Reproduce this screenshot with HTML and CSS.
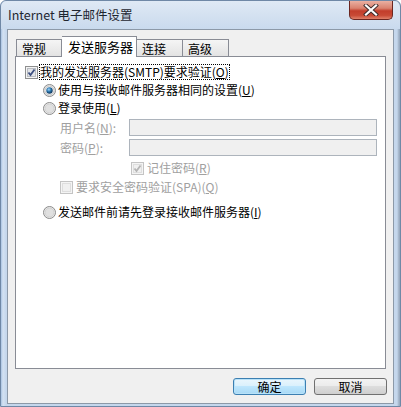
FILE: index.html
```html
<!DOCTYPE html>
<html>
<head>
<meta charset="utf-8">
<link rel="stylesheet" href="styles.css">
</head>
<body>
<div class="window">
  <div class="titlebar">
    <span class="title">Internet 电子邮件设置</span>
    <div class="close">
      <svg width="16" height="12" viewBox="0 0 16 12"><path d="M3 1.5 L13 10.5 M13 1.5 L3 10.5" stroke="#3b2a2a" stroke-width="4" stroke-linecap="square"/><path d="M3 1.5 L13 10.5 M13 1.5 L3 10.5" stroke="#ffffff" stroke-width="2.2" stroke-linecap="square"/></svg>
    </div>
  </div>
  <div class="client">
    <div class="tabs">
      <div class="tab">常规</div>
      <div class="tab active">发送服务器</div>
      <div class="tab">连接</div>
      <div class="tab">高级</div>
    </div>
    <div class="panel">
      <div class="row r1">
        <svg class="cb" width="13" height="13" viewBox="0 0 13 13"><rect x="0.5" y="0.5" width="12" height="12" fill="#f4f4f4" stroke="#8e8f8f"/><rect x="2.5" y="2.5" width="8" height="8" fill="#e2e4e8" stroke="#b9bcc1"/><path d="M3.5 6.5 L5.5 9 L9.5 3.5" fill="none" stroke="#3d4f80" stroke-width="1.8"/></svg>
        <span class="lbl focus">我的发送服务器(SMTP)要求验证(<u>O</u>)</span>
      </div>
      <div class="row r2">
        <svg class="rb" width="13" height="13" viewBox="0 0 13 13"><defs><radialGradient id="g1" cx="0.4" cy="0.35" r="0.6"><stop offset="0" stop-color="#9fd6ff"/><stop offset="0.6" stop-color="#236ea4"/><stop offset="1" stop-color="#133c63"/></radialGradient></defs><circle cx="6.5" cy="6.5" r="6" fill="#e9e9e9" stroke="#8b8b8b"/><circle cx="6.5" cy="6.5" r="4.5" fill="#f6f6f6" stroke="#c5c5c5"/><circle cx="6.5" cy="6.5" r="3.2" fill="url(#g1)"/></svg>
        <span class="lbl">使用与接收邮件服务器相同的设置(<u>U</u>)</span>
      </div>
      <div class="row r3">
        <svg class="rb" width="13" height="13" viewBox="0 0 13 13"><circle cx="6.5" cy="6.5" r="6" fill="#ececec" stroke="#8b8b8b"/><circle cx="6.5" cy="6.5" r="4.5" fill="#e0e0e0" stroke="#d0d0d0"/></svg>
        <span class="lbl">登录使用(<u>L</u>)</span>
      </div>
      <div class="row field r4">
        <span class="flbl dis">用户名(<u>N</u>):</span>
        <div class="input"></div>
      </div>
      <div class="row field r5">
        <span class="flbl dis">密码(<u>P</u>):</span>
        <div class="input"></div>
      </div>
      <div class="row r6">
        <svg class="cb" width="13" height="13" viewBox="0 0 13 13"><rect x="0.5" y="0.5" width="12" height="12" fill="#f4f4f4" stroke="#c4c4c4"/><rect x="2.5" y="2.5" width="8" height="8" fill="#f0f0f0" stroke="#dedede"/><path d="M3.5 6.5 L5.5 9 L9.5 3.5" fill="none" stroke="#b4b4b4" stroke-width="1.8"/></svg>
        <span class="lbl dis">记住密码(<u>R</u>)</span>
      </div>
      <div class="row r7">
        <svg class="cb" width="13" height="13" viewBox="0 0 13 13"><rect x="0.5" y="0.5" width="12" height="12" fill="#f4f4f4" stroke="#c4c4c4"/><rect x="2.5" y="2.5" width="8" height="8" fill="#f0f0f0" stroke="#dedede"/></svg>
        <span class="lbl dis">要求安全密码验证(SPA)(<u>Q</u>)</span>
      </div>
      <div class="row r8">
        <svg class="rb" width="13" height="13" viewBox="0 0 13 13"><circle cx="6.5" cy="6.5" r="6" fill="#ececec" stroke="#8b8b8b"/><circle cx="6.5" cy="6.5" r="4.5" fill="#e0e0e0" stroke="#d0d0d0"/></svg>
        <span class="lbl">发送邮件前请先登录接收邮件服务器(<u>I</u>)</span>
      </div>
    </div>
    <div class="buttons">
      <div class="btn default">确定</div>
      <div class="btn">取消</div>
    </div>
  </div>
</div>
</body>
</html>
```

FILE: styles.css
```css
html, body {
  margin: 0;
  padding: 0;
  width: 401px;
  height: 407px;
  overflow: hidden;
  background: #ffffff;
}
body {
  font-family: "Noto Sans CJK SC", "Noto Sans", sans-serif;
  font-size: 12px;
  color: #000;
}
.window {
  width: 401px;
  height: 407px;
  box-sizing: border-box;
  display: flex;
  flex-direction: column;
  background: linear-gradient(90deg, #a9c3e2 0px, #d4e2f2 2px, #c5d7ec 5px, #c5d7ec 396px, #9fb0c4 398px, #7f96b2 401px);
  border: 1px solid #6f88a6;
  border-radius: 6px 6px 0 0;
  padding: 0 6px 2px 6px;
}
.titlebar {
  height: 28px;
  flex: none;
  display: flex;
  align-items: flex-start;
  justify-content: space-between;
  background: linear-gradient(180deg, #dfe9f5 0%, #d2e0f0 60%, #c9daee 100%);
  margin: 0 -6px;
  padding: 0 6px 0 7px;
  border-radius: 6px 6px 0 0;
}
.title {
  font-family: "Segoe UI", "Noto Sans CJK SC", sans-serif;
  font-size: 12.5px;
  line-height: 28px;
  color: #1e2630;
}
.close {
  width: 44px;
  height: 19px;
  margin-right: 1px;
  box-sizing: border-box;
  border: 1px solid #6b2620;
  border-top: none;
  border-radius: 0 0 5px 5px;
  background: linear-gradient(180deg, #eab0a2 0%, #d9826f 40%, #c23d2b 55%, #c84a35 80%, #e0816a 100%);
  display: flex;
  align-items: center;
  justify-content: center;
}
.client {
  flex: 1;
  background: #f0f0f0;
  border: 1px solid #8c99a8;
  display: flex;
  flex-direction: column;
  padding: 6px 6px 0 7px;
}
.tabs {
  display: flex;
  align-items: flex-end;
  height: 20px;
  padding-left: 1px;
  position: relative;
  z-index: 1;
}
.tab {
  width: 46px;
  height: 17px;
  box-sizing: border-box;
  border: 1px solid #898c95;
  border-bottom: none;
  border-left: none;
  background: linear-gradient(180deg, #f5f5f5, #e3e3e3);
  padding-left: 5px;
  line-height: 17px;
  font-size: 12px;
}
.tab:first-child {
  border-left: 1px solid #898c95;
}
.tab.active {
  width: 75px;
  height: 21px;
  margin-bottom: -1px;
  background: #ffffff;
  border-left: none;
  padding-left: 6px;
  line-height: 20px;
  font-size: 13px;
}
.panel {
  width: 371px;
  height: 313px;
  box-sizing: border-box;
  border: 1px solid #898c95;
  background: #ffffff;
  display: flex;
  flex-direction: column;
}
.row {
  display: flex;
  align-items: center;
  height: 16px;
  white-space: nowrap;
}
.row svg {
  flex: none;
}
.lbl {
  line-height: 16px;
  margin-left: 3px;
}
.lbl u, .flbl u {
  text-decoration: underline;
  text-underline-offset: 1px;
}
.focus {
  outline: 1px dotted #000;
  outline-offset: -1px;
  padding: 0 1px;
  margin-left: 1px;
}
.dis {
  color: #a0a0a0;
}
.r1 { margin-top: 7px; padding-left: 9px; }
.r2 { margin-top: 2px; padding-left: 27px; }
.r3 { margin-top: 2px; padding-left: 27px; }
.r4 { margin-top: 3px; height: 17px; padding-left: 44px; }
.r5 { margin-top: 3px; height: 17px; padding-left: 44px; }
.r6 { margin-top: 4px; padding-left: 115px; }
.r7 { margin-top: 3px; padding-left: 44px; }
.r8 { margin-top: 9px; padding-left: 27px; }
.r2 .lbl, .r3 .lbl, .r8 .lbl { margin-left: 2px; }
.flbl {
  width: 69px;
}
.input {
  width: 248px;
  height: 17px;
  box-sizing: border-box;
  border: 1px solid #adb4bc;
  background: #f0f0f0;
}
.buttons {
  display: flex;
  justify-content: flex-end;
  gap: 8px;
  margin-top: 9px;
  padding-right: 0;
}
.btn {
  width: 73px;
  height: 17px;
  box-sizing: border-box;
  border: 1px solid #707070;
  border-radius: 3px;
  background: linear-gradient(180deg, #f3f3f3 0%, #ebebeb 49%, #dddddd 50%, #cfcfcf 100%);
  text-align: center;
  line-height: 15px;
  font-size: 12px;
}
.btn.default {
  border-color: #3c7fb1;
  background: linear-gradient(180deg, #eaf6fd 0%, #d9f0fc 49%, #bee6fd 50%, #a7d9f5 100%);
  box-shadow: inset 0 0 0 1px #b8e2f9;
}
```
